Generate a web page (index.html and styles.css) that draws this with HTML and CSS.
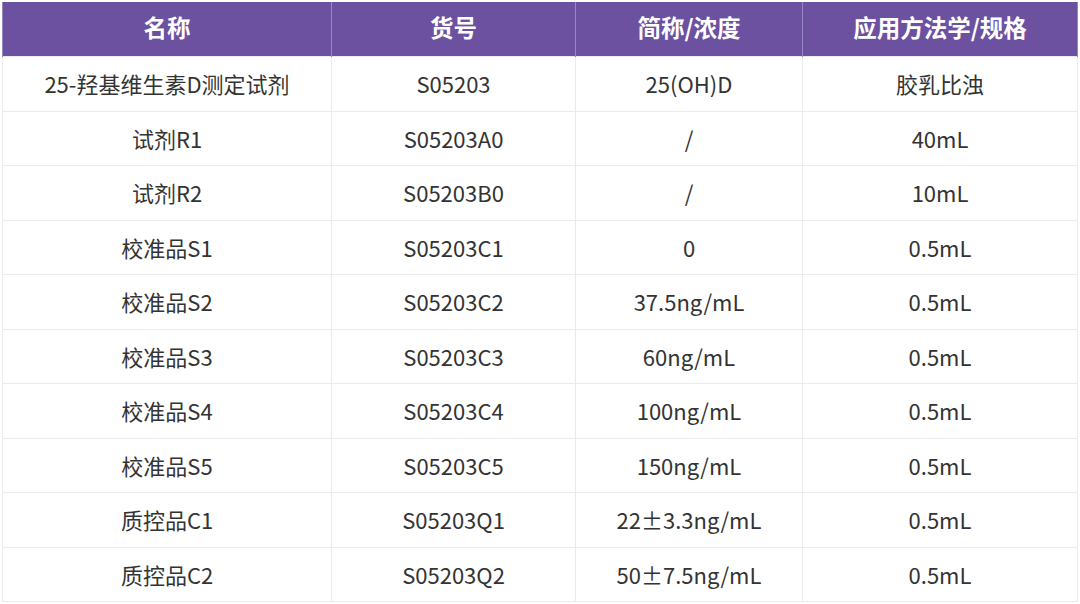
FILE: index.html
```html
<!DOCTYPE html>
<html lang="zh">
<head>
<meta charset="utf-8">
<link rel="stylesheet" href="styles.css">
</head>
<body>
<table class="spec">
<colgroup><col class="c1"><col class="c2"><col class="c3"><col class="c4"></colgroup>
<thead>
<tr><th>名称</th><th>货号</th><th>简称/浓度</th><th>应用方法学/规格</th></tr>
</thead>
<tbody>
<tr><td>25-羟基维生素D测定试剂</td><td>S05203</td><td>25(OH)D</td><td>胶乳比浊</td></tr>
<tr><td>试剂R1</td><td>S05203A0</td><td>/</td><td>40mL</td></tr>
<tr><td>试剂R2</td><td>S05203B0</td><td>/</td><td>10mL</td></tr>
<tr><td>校准品S1</td><td>S05203C1</td><td>0</td><td>0.5mL</td></tr>
<tr><td>校准品S2</td><td>S05203C2</td><td>37.5ng/mL</td><td>0.5mL</td></tr>
<tr><td>校准品S3</td><td>S05203C3</td><td>60ng/mL</td><td>0.5mL</td></tr>
<tr><td>校准品S4</td><td>S05203C4</td><td>100ng/mL</td><td>0.5mL</td></tr>
<tr><td>校准品S5</td><td>S05203C5</td><td>150ng/mL</td><td>0.5mL</td></tr>
<tr><td>质控品C1</td><td>S05203Q1</td><td>22±3.3ng/mL</td><td>0.5mL</td></tr>
<tr><td>质控品C2</td><td>S05203Q2</td><td>50±7.5ng/mL</td><td>0.5mL</td></tr>
</tbody>
</table>
</body>
</html>
```
FILE: styles.css
```css
html, body {
  margin: 0;
  padding: 0;
  background: #ffffff;
}
body {
  padding: 2px 3px 0 2px;
  font-family: "Noto Sans CJK SC", "Noto Sans", sans-serif;
}
.spec {
  width: 1075px;
  border-collapse: collapse;
  table-layout: fixed;
}
.c1 { width: 329px; }
.c2 { width: 244px; }
.c3 { width: 227px; }
.c4 { width: 275px; }
.spec th {
  background: #6b51a0;
  color: #ffffff;
  font-weight: 700;
  font-size: 23.5px;
  line-height: 1;
  height: 51px;
  padding: 0 0 3px 0;
  text-align: center;
  border-left: 1px solid #9888c0;
  border-right: 1px solid #9888c0;
}
.spec td {
  color: #333333;
  font-size: 22px;
  line-height: 1;
  height: 52.5px;
  padding: 0 0 1px 0;
  text-align: center;
  border: 1px solid #ebebeb;
}
```
